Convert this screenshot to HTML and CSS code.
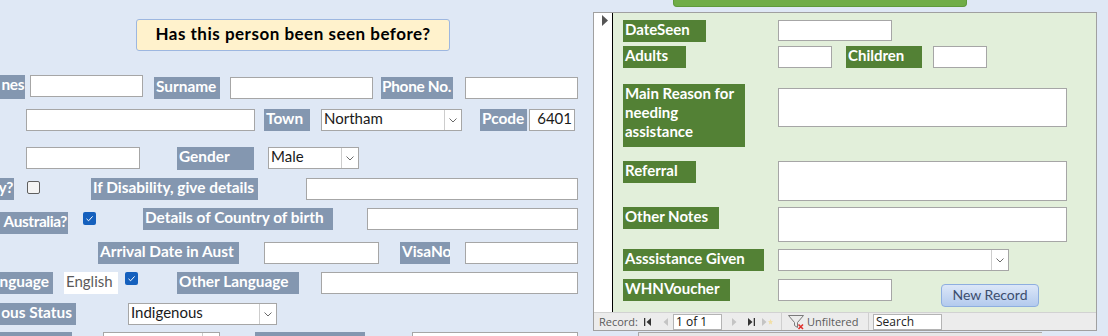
FILE: index.html
```html
<!DOCTYPE html>
<html>
<head>
<meta charset="utf-8">
<title>Client Form</title>
<link rel="stylesheet" href="styles.css">
</head>
<body>
<div class="page">
  <div class="main">
    <div class="row"><div class="title">Has this person been seen before?</div></div>

    <div class="row">
      <div class="lb lb-end tight given-l">nes</div>
      <div class="tb given-t"></div>
      <div class="lb surname-l">Surname</div>
      <div class="tb surname-t"></div>
      <div class="lb phone-l">Phone No.</div>
      <div class="tb phone-t"></div>
    </div>

    <div class="row">
      <div class="tb addr-t"></div>
      <div class="lb town-l">Town</div>
      <div class="tb sel town-t"><span class="val">Northam</span><span class="dd"><svg width="8" height="5" viewBox="0 0 8 5"><polyline points="0.5,0.5 4,4 7.5,0.5" fill="none" stroke="#6a6a6a" stroke-width="1"/></svg></span></div>
      <div class="lb pcode-l">Pcode</div>
      <div class="tb pcode-t"><span class="val num">6401</span></div>
    </div>

    <div class="row">
      <div class="tb dob-t"></div>
      <div class="lb gender-l">Gender</div>
      <div class="tb sel gender-t"><span class="val">Male</span><span class="dd"><svg width="8" height="5" viewBox="0 0 8 5"><polyline points="0.5,0.5 4,4 7.5,0.5" fill="none" stroke="#6a6a6a" stroke-width="1"/></svg></span></div>
    </div>

    <div class="row">
      <div class="lb lb-end tight dis-l">y?</div>
      <div class="chk dis-c"></div>
      <div class="lb disd-l">If Disability, give details</div>
      <div class="tb disd-t"></div>
    </div>

    <div class="row">
      <div class="lb lb-end tight aus-l">Australia?</div>
      <div class="chk on aus-c"><svg width="13" height="13" viewBox="0 0 13 13"><polyline points="3.5,6.8 5.6,8.8 9.6,4.4" fill="none" stroke="#fff" stroke-width="1"/></svg></div>
      <div class="lb cob-l">Details of Country of birth</div>
      <div class="tb cob-t"></div>
    </div>

    <div class="row">
      <div class="lb arr-l">Arrival Date in Aust</div>
      <div class="tb arr-t"></div>
      <div class="lb visa-l">VisaNo</div>
      <div class="tb visa-t"></div>
    </div>

    <div class="row">
      <div class="lb lb-end lang-l">nguage</div>
      <div class="plain lang-v">English</div>
      <div class="chk on lang-c"><svg width="13" height="13" viewBox="0 0 13 13"><polyline points="3.5,6.8 5.6,8.8 9.6,4.4" fill="none" stroke="#fff" stroke-width="1"/></svg></div>
      <div class="lb olang-l">Other Language</div>
      <div class="tb olang-t"></div>
    </div>

    <div class="row">
      <div class="lb lb-end ind-l">ous Status</div>
      <div class="tb sel ind-t"><span class="val">Indigenous</span><span class="dd"><svg width="8" height="5" viewBox="0 0 8 5"><polyline points="0.5,0.5 4,4 7.5,0.5" fill="none" stroke="#6a6a6a" stroke-width="1"/></svg></span></div>
    </div>

    <div class="row last">
      <div class="lb hh-l"></div>
      <div class="tb sel hh-t"><span class="val"></span><span class="dd"></span></div>
      <div class="lb inc-l"></div>
      <div class="tb inc-t"></div>
    </div>
  </div>

  <div class="side">
    <div class="topbtn"></div>
    <div class="sub">
      <div class="sub-body">
        <div class="selector"><svg class="sel-arrow" width="6" height="11" viewBox="0 0 6 11"><polygon points="0,0 6,5.5 0,11" fill="#555"/></svg></div>
        <div class="detail">
          <div class="row">
            <div class="gl seen-l">DateSeen</div>
            <div class="tb seen-t"></div>
          </div>
          <div class="row">
            <div class="gl adults-l">Adults</div>
            <div class="tb adults-t"></div>
            <div class="gl kids-l">Children</div>
            <div class="tb kids-t"></div>
          </div>
          <div class="row">
            <div class="gl reason-l">Main Reason for needing assistance</div>
            <div class="tb reason-t"></div>
          </div>
          <div class="row">
            <div class="gl ref-l">Referral</div>
            <div class="tb ref-t"></div>
          </div>
          <div class="row">
            <div class="gl notes-l">Other Notes</div>
            <div class="tb notes-t"></div>
          </div>
          <div class="row">
            <div class="gl given-gl">Asssistance Given</div>
            <div class="tb sel given-sel"><span class="val"></span><span class="dd"><svg width="8" height="5" viewBox="0 0 8 5"><polyline points="0.5,0.5 4,4 7.5,0.5" fill="none" stroke="#6a6a6a" stroke-width="1"/></svg></span></div>
          </div>
          <div class="row">
            <div class="gl whn-l">WHNVoucher</div>
            <div class="tb whn-t"></div>
            <div class="newbtn">New Record</div>
          </div>
        </div>
      </div>
      <div class="nav">
        <span class="nav-lbl">Record:</span>
        <svg class="nv nv-first" width="7" height="8" viewBox="0 0 7 8"><rect x="0" y="0" width="1.3" height="8" fill="#333"/><polygon points="7,0 2.5,4 7,8" fill="#333"/></svg>
        <svg class="nv nv-prev" width="5" height="8" viewBox="0 0 5 8"><polygon points="5,0 0.5,4 5,8" fill="#c4c4c4"/></svg>
        <span class="nav-box">1 of 1</span>
        <svg class="nv nv-next" width="5" height="8" viewBox="0 0 5 8"><polygon points="0,0 4.5,4 0,8" fill="#c4c4c4"/></svg>
        <svg class="nv nv-last" width="7" height="8" viewBox="0 0 7 8"><polygon points="0,0 4.5,4 0,8" fill="#333"/><rect x="5.7" y="0" width="1.3" height="8" fill="#333"/></svg>
        <svg class="nv nv-new" width="11" height="8" viewBox="0 0 11 8"><polygon points="0,0 4.5,4 0,8" fill="#c4c4c4"/><polygon points="8.5,1 9.3,3 11,3.2 9.7,4.4 10.1,6.5 8.5,5.4 6.9,6.5 7.3,4.4 6,3.2 7.7,3" fill="#f1dfa6"/></svg>
        <span class="nav-sep sep1"></span>
        <svg class="nv nv-filter" width="17" height="16" viewBox="0 0 17 16"><polygon points="0.5,1.5 15.5,1.5 9.5,8.5 9.5,13.5 6.5,11.5 6.5,8.5" fill="none" stroke="#7a7a7a" stroke-width="1"/><path d="M10.5 10.5 L15 15 M15 10.5 L10.5 15" stroke="#e0302c" stroke-width="1.6"/></svg>
        <span class="nav-txt">Unfiltered</span>
        <span class="nav-sep sep2"></span>
        <span class="nav-search">Search</span>
      </div>
    </div>
    <div class="hbar"></div>
  </div>
</div>
</body>
</html>
```

FILE: styles.css
```css
html, body {
  margin: 0;
  padding: 0;
}
body {
  width: 1108px;
  height: 336px;
  overflow: hidden;
  background: #dfe8f5;
  font-family: Lato, "Liberation Sans", sans-serif;
  color: #000;
}
.page {
  display: flex;
  align-items: flex-start;
  height: 336px;
  overflow: hidden;
}
.main {
  width: 593px;
  height: 336px;
  flex: none;
  box-sizing: border-box;
  padding-top: 19px;
  display: grid;
  grid-template-rows: 56px 34px 38px 31px 30px 34px 30px 31px 29px 4px;
  overflow: hidden;
}
.row {
  display: flex;
  align-items: flex-start;
}
.title {
  margin-left: 136px;
  width: 314px;
  height: 32px;
  box-sizing: border-box;
  background: #fff2cc;
  border: 1px solid #9db7e0;
  border-radius: 3px;
  font-weight: 700;
  font-size: 17px;
  letter-spacing: 0.5px;
  line-height: 28px;
  text-align: center;
}
.lb, .gl {
  flex: none;
  height: 22px;
  box-sizing: border-box;
  padding-left: 2px;
  color: #fff;
  font-weight: 700;
  font-size: 15px;
  line-height: 19px;
  white-space: nowrap;
  overflow: hidden;
}
.lb { background: #8497b0; font-size: 15.4px; }
.gl { background: #538135; }
.lb-end {
  display: flex;
  justify-content: flex-end;
  padding-left: 0;
  padding-right: 4px;
}
.lb-end.tight {
  padding-right: 1px;
  letter-spacing: -0.4px;
}
.tb {
  flex: none;
  height: 22px;
  box-sizing: border-box;
  background: #fff;
  border: 1px solid #a6a6a6;
  font-size: 15px;
  line-height: 17px;
  color: #1a1a1a;
}
.val {
  display: block;
  padding-left: 2px;
  white-space: nowrap;
}
.num {
  text-align: right;
  padding-left: 0;
  padding-right: 2px;
}
.sel {
  display: flex;
}
.sel .val { flex: 1; }
.dd {
  flex: none;
  width: 17px;
  height: 20px;
  box-sizing: border-box;
  border-left: 1px solid #cdcdcd;
  background: #fff;
  display: flex;
  align-items: center;
  justify-content: center;
}
.plain {
  flex: none;
  height: 22px;
  box-sizing: border-box;
  background: #fff;
  padding-left: 2px;
  font-size: 15px;
  line-height: 18px;
  color: #5a5a5a;
}
.chk {
  flex: none;
  width: 13px;
  height: 13px;
  box-sizing: border-box;
  border: 1px solid #5f5f5f;
  border-radius: 2px;
  background: #f4f4f4;
}
.chk.on {
  border: none;
  background: #1560bd;
}
.chk svg { display: block; }

/* row 1 */
.given-l { width: 25px; height: 24px; }
.given-t { margin-left: 5px; width: 113px; }
.surname-l { margin-left: 11px; width: 66px; margin-top: 2px; }
.surname-t { margin-left: 10px; width: 143px; margin-top: 2px; }
.phone-l { margin-left: 8px; width: 72px; margin-top: 2px; padding-left: 1px; letter-spacing: -0.3px; }
.phone-t { margin-left: 12px; width: 113px; margin-top: 2px; }
/* row 2 */
.addr-t { margin-left: 26px; width: 229px; }
.town-l { margin-left: 9px; width: 46px; }
.town-t { margin-left: 11px; width: 141px; }
.pcode-l { margin-left: 18px; width: 47px; }
.pcode-t { margin-left: 2px; width: 46px; }
/* row 3 */
.dob-t { margin-left: 26px; width: 114px; }
.gender-l { margin-left: 37px; width: 77px; height: 23px; }
.gender-t { margin-left: 14px; width: 91px; }
/* row 4 */
.dis-l { width: 14px; }
.dis-c { margin-left: 13px; margin-top: 3px; }
.disd-l { margin-left: 51px; width: 167px; }
.disd-t { margin-left: 48px; width: 272px; }
/* row 5 */
.aus-l { width: 68px; margin-top: 4px; }
.aus-c { margin-left: 15px; margin-top: 4px; }
.cob-l { margin-left: 47px; width: 190px; }
.cob-t { margin-left: 34px; width: 211px; }
/* row 6 */
.arr-l { margin-left: 98px; width: 141px; }
.arr-t { margin-left: 25px; width: 115px; }
.visa-l { margin-left: 21px; width: 50px; }
.visa-t { margin-left: 15px; width: 113px; }
/* row 7 */
.lang-l { width: 53px; }
.lang-v { margin-left: 11px; width: 54px; }
.lang-c { margin-left: 7px; }
.olang-l { margin-left: 39px; width: 122px; }
.olang-t { margin-left: 22px; width: 257px; }
/* row 8 */
.ind-l { width: 76px; }
.ind-t { margin-left: 52px; width: 149px; }
/* row 9 (cut by window edge) */
.last > div { height: 4px; border-bottom: none; }
.last .dd { height: 3px; }
.hh-l { width: 72px; }
.hh-t { margin-left: 31px; width: 117px; }
.inc-l { margin-left: 35px; width: 110px; }
.inc-t { margin-left: 47px; width: 166px; }

/* right side */
.side {
  width: 504px;
  flex: none;
  display: flex;
  flex-direction: column;
}
.topbtn {
  margin-left: 80px;
  width: 294px;
  height: 7px;
  box-sizing: border-box;
  background: #70ad47;
  border: 1px solid #5f9a3b;
  border-top: none;
  border-radius: 0 0 4px 4px;
}
.sub {
  margin-top: 5px;
  height: 319px;
  box-sizing: border-box;
  border: 1px solid #a0a0a0;
  display: flex;
  flex-direction: column;
}
.sub-body {
  flex: 1;
  display: flex;
  min-height: 0;
}
.selector {
  width: 19px;
  flex: none;
  box-sizing: border-box;
  background: #fff;
  border-right: 1px solid #000;
}
.sel-arrow {
  display: block;
  margin: 2px 0 0 8px;
}
.detail {
  flex: 1;
  background: #e2efda;
  padding-top: 7px;
  display: grid;
  grid-template-rows: 26px 38px 77px 46px 42px 30px auto;
}
.gl { margin-left: 10px; }
.seen-l { width: 83px; }
.seen-t { margin-left: 72px; width: 114px; height: 21px; }
.adults-l { width: 63px; }
.adults-t { margin-left: 92px; width: 54px; }
.kids-l { margin-left: 14px; width: 76px; }
.kids-t { margin-left: 11px; width: 54px; }
.reason-l { width: 122px; height: 63px; white-space: normal; padding-right: 4px; }
.reason-t { margin-left: 33px; margin-top: 4px; width: 289px; height: 39px; }
.ref-l { width: 73px; }
.ref-t { margin-left: 82px; width: 289px; height: 40px; }
.notes-l { width: 96px; }
.notes-t { margin-left: 59px; width: 289px; height: 35px; }
.given-gl { width: 141px; }
.given-sel { margin-left: 14px; width: 231px; }
.whn-l { width: 107px; }
.whn-t { margin-left: 48px; width: 114px; }
.newbtn {
  flex: none;
  margin-left: 49px;
  margin-top: 5px;
  width: 98px;
  height: 23px;
  box-sizing: border-box;
  border: 1px solid #8eaee0;
  border-radius: 4px;
  background: linear-gradient(#dce7f8, #b3caee);
  color: #3c4e6e;
  font-size: 14px;
  line-height: 20px;
  text-align: center;
}

.nav {
  height: 18px;
  flex: none;
  box-sizing: border-box;
  background: #ececec;
  border-top: 1px solid #d2d2d2;
  display: flex;
  align-items: center;
  font-family: "Open Sans", "Noto Sans", sans-serif;
  font-size: 11px;
  color: #5a5a5a;
  white-space: nowrap;
}
.nv { flex: none; display: block; }
.nav-lbl { margin-left: 5px; width: 45px; flex: none; }
.nv-prev { margin-left: 12px; }
.nav-box {
  flex: none;
  margin-left: 5px;
  width: 49px;
  height: 16px;
  box-sizing: border-box;
  background: #fff;
  border: 1px solid #b4b4b4;
  padding-left: 2px;
  font-size: 12px;
  line-height: 14px;
  color: #111;
}
.nv-next { margin-left: 10px; }
.nv-last { margin-left: 11px; }
.nv-new { margin-left: 7px; }
.nav-sep {
  flex: none;
  width: 1px;
  height: 17px;
  background: #cfcfcf;
}
.sep1 { margin-left: 8px; }
.nv-filter { margin-left: 6px; }
.nav-txt { margin-left: 2px; width: 61px; flex: none; }
.nav-search {
  flex: none;
  margin-left: 4px;
  width: 69px;
  height: 16px;
  box-sizing: border-box;
  background: #fff;
  border: 1px solid #b4b4b4;
  padding-left: 2px;
  font-size: 12px;
  line-height: 14px;
  color: #222;
}
.hbar {
  margin-left: 45px;
  margin-top: 1px;
  width: 404px;
  height: 5px;
  box-sizing: border-box;
  background: #e8e8e8;
  border-top: 1px solid #a8a8a8;
  border-left: 1px solid #a8a8a8;
}
```
